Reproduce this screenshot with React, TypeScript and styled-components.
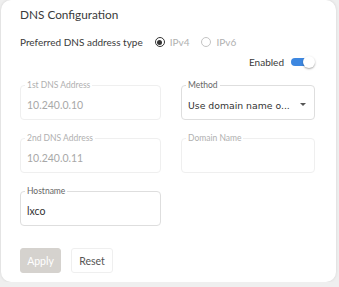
import React from "react";
import styled, {createGlobalStyle} from "styled-components";

const GlobalStyle = createGlobalStyle`
  html, body {
    margin: 0;
    padding: 0;
    background: #efefef;
    font-family: Lato, "Open Sans", sans-serif;
  }
`

const Card = styled.div`
  box-sizing: border-box;
  margin: 0 3px 0 1px;
  width: 335px;
  height: 282px;
  background: #ffffff;
  border-radius: 10px;
  box-shadow: 0 0 3px rgba(0, 0, 0, 0.12);
  padding: 7px 19px 0 19px;
  display: flex;
  flex-direction: column;
`

const Title = styled.div`
  font-size: 11.8px;
  line-height: 16px;
  color: #3a3a3a;
`

const TypeRow = styled.div`
  margin-top: 11px;
  display: flex;
  align-items: center;
  height: 16px;
  font-size: 10px;
  color: #3a3a3a;
`

const RadioGroup = styled.div`
  display: flex;
  align-items: center;
  margin-left: 12px;
  gap: 12px;
`

const RadioItem = styled.label`
  display: flex;
  align-items: center;
  gap: 5px;
  color: #b0b0b0;
  font-size: 10px;
`

const RadioCircle = styled.span<{ $checked?: boolean }>`
  box-sizing: border-box;
  width: 10px;
  height: 10px;
  border-radius: 50%;
  border: 1.2px solid ${p => (p.$checked ? "#333333" : "#c4c4c4")};
  display: flex;
  align-items: center;
  justify-content: center;

  &::after {
    content: "";
    display: ${p => (p.$checked ? "block" : "none")};
    width: 5px;
    height: 5px;
    border-radius: 50%;
    background: #333333;
  }
`

const EnabledRow = styled.div`
  margin-top: 4px;
  display: flex;
  align-items: center;
  justify-content: flex-end;
  gap: 7px;
  height: 16px;
  font-size: 10px;
  color: #3a3a3a;
  padding-right: 2px;
`

const Toggle = styled.span`
  position: relative;
  width: 24px;
  height: 12px;
  display: inline-block;

  &::before {
    content: "";
    position: absolute;
    left: 0;
    top: 2px;
    width: 17px;
    height: 8px;
    border-radius: 4px;
    background: #3d87e0;
  }

  &::after {
    content: "";
    position: absolute;
    right: 0;
    top: 0;
    width: 12px;
    height: 12px;
    border-radius: 50%;
    background: #ffffff;
    box-shadow: 0 1px 2px rgba(0, 0, 0, 0.35);
  }
`

const FieldGrid = styled.div`
  margin-top: 15px;
  display: grid;
  grid-template-columns: 141px 134px;
  column-gap: 20px;
  row-gap: 18px;
`

const Field = styled.div<{ $strong?: boolean }>`
  position: relative;
  box-sizing: border-box;
  height: 35px;
  border: 1px solid ${p => (p.$strong ? "#dedede" : "#efefef")};
  border-radius: 4px;
  padding: 12px 6px 0 6px;
`

const FieldLabel = styled.span<{ $strong?: boolean }>`
  position: absolute;
  top: -6px;
  left: 4px;
  padding: 0 2px;
  background: #ffffff;
  font-size: 8.5px;
  line-height: 11px;
  color: ${p => (p.$strong ? "#666666" : "#b0b0b0")};
`

const FieldValue = styled.div<{ $muted?: boolean }>`
  font-size: 10.5px;
  line-height: 14px;
  color: ${p => (p.$muted ? "#a8a8a8" : "#333333")};
`

const SelectValue = styled.div`
  display: flex;
  align-items: center;
  justify-content: space-between;
  font-family: "DejaVu Sans", Verdana, sans-serif;
  font-size: 9.3px;
  line-height: 14px;
  color: #333333;
  padding-top: 1px;
`

const Caret = styled.span`
  width: 0;
  height: 0;
  border-left: 3px solid transparent;
  border-right: 3px solid transparent;
  border-top: 3px solid #555555;
  margin-right: 2px;
  margin-top: -4px;
`

const Actions = styled.div`
  margin-top: 22px;
  display: flex;
  gap: 10px;
`

const Button = styled.button<{ $primary?: boolean }>`
  box-sizing: border-box;
  height: 25px;
  width: ${p => (p.$primary ? "41px" : "42px")};
  padding: 0;
  border-radius: 3px;
  font-family: Lato, sans-serif;
  font-size: 10.5px;
  border: 1px solid ${p => (p.$primary ? "#d5d2ce" : "#efefef")};
  background: ${p => (p.$primary ? "#d5d2ce" : "#ffffff")};
  color: ${p => (p.$primary ? "#ffffff" : "#555555")};
`

export default function App() {
    return (
        <>
            <GlobalStyle/>
            <Card>
                <Title>DNS Configuration</Title>
                <TypeRow>
                    Preferred DNS address type
                    <RadioGroup>
                        <RadioItem><RadioCircle $checked/>IPv4</RadioItem>
                        <RadioItem><RadioCircle/>IPv6</RadioItem>
                    </RadioGroup>
                </TypeRow>
                <EnabledRow>
                    Enabled
                    <Toggle/>
                </EnabledRow>
                <FieldGrid>
                    <Field>
                        <FieldLabel>1st DNS Address</FieldLabel>
                        <FieldValue $muted>10.240.0.10</FieldValue>
                    </Field>
                    <Field $strong>
                        <FieldLabel $strong>Method</FieldLabel>
                        <SelectValue>Use domain name o...<Caret/></SelectValue>
                    </Field>
                    <Field>
                        <FieldLabel>2nd DNS Address</FieldLabel>
                        <FieldValue $muted>10.240.0.11</FieldValue>
                    </Field>
                    <Field>
                        <FieldLabel>Domain Name</FieldLabel>
                    </Field>
                    <Field $strong>
                        <FieldLabel $strong>Hostname</FieldLabel>
                        <FieldValue>lxco</FieldValue>
                    </Field>
                </FieldGrid>
                <Actions>
                    <Button $primary>Apply</Button>
                    <Button>Reset</Button>
                </Actions>
            </Card>
        </>
    )
}
